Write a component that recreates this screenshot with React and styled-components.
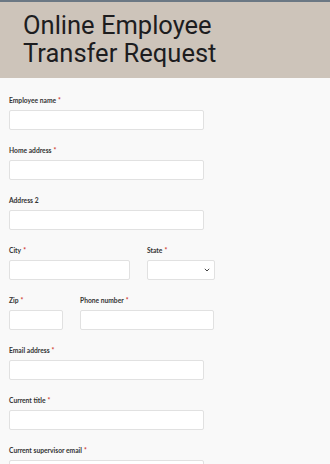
import styled, { createGlobalStyle } from "styled-components";

const GlobalStyle = createGlobalStyle`
  html, body {
    margin: 0;
    padding: 0;
    overflow: hidden;
    background: #f9f9f9;
  }
`;

const Page = styled.div`
  width: 330px;
  min-height: 464px;
  background: #f9f9f9;
`;

const Header = styled.header`
  border-top: 2px solid #6b7884;
  background: #cdc4ba;
  padding: 9px 23px 11px;
  font-family: Roboto, "Noto Sans", sans-serif;
  font-size: 25.5px;
  line-height: 28px;
  color: #1d1d1f;
`;

const Form = styled.form`
  padding: 17px 9px 0;
  display: flex;
  flex-direction: column;
  gap: 15px;
`;

const Row = styled.div`
  display: flex;
  gap: 17px;
`;

const Field = styled.div`
  display: flex;
  flex-direction: column;
  gap: 4px;
`;

const Label = styled.label`
  font-family: Lato, "Open Sans", sans-serif;
  font-weight: 700;
  font-size: 6.7px;
  line-height: 11px;
  color: #333;

  span {
    color: #d0342c;
    margin-left: 2px;
  }
`;

const Input = styled.input`
  box-sizing: border-box;
  width: ${(p) => p.$w}px;
  height: 20px;
  margin: 0;
  padding: 0 6px;
  background: #fff;
  border: 1px solid #e1e1e1;
  border-radius: 2px;
  outline: none;
`;

const SelectBox = styled.div`
  box-sizing: border-box;
  width: ${(p) => p.$w}px;
  height: 20px;
  background: #fff;
  border: 1px solid #e1e1e1;
  border-radius: 2px;
  display: flex;
  align-items: center;
  justify-content: flex-end;
  padding-right: 4px;
`;

const Chevron = () => (
  <svg width="6" height="4" viewBox="0 0 6 4" aria-hidden="true">
    <path d="M0.8 0.8 L3 3 L5.2 0.8" fill="none" stroke="#444" strokeWidth="1" />
  </svg>
);

const TextField = ({ label, w = 195 }) => (
  <Field>
    <Label>
      {label}
      <span>*</span>
    </Label>
    <Input $w={w} />
  </Field>
);

const App = () => {
  return (
    <Page>
      <GlobalStyle />
      <Header>
        Online Employee
        <br />
        Transfer Request
      </Header>
      <Form>
        <TextField label="Employee name" />
        <TextField label="Home address" />
        <Field>
          <Label>Address 2</Label>
          <Input $w={195} />
        </Field>
        <Row>
          <TextField label="City" w={121} />
          <Field>
            <Label>
              State<span>*</span>
            </Label>
            <SelectBox $w={68}>
              <Chevron />
            </SelectBox>
          </Field>
        </Row>
        <Row>
          <TextField label="Zip" w={54} />
          <TextField label="Phone number" w={134} />
        </Row>
        <TextField label="Email address" />
        <TextField label="Current title" />
        <TextField label="Current supervisor email" />
      </Form>
    </Page>
  );
};

export default App;
